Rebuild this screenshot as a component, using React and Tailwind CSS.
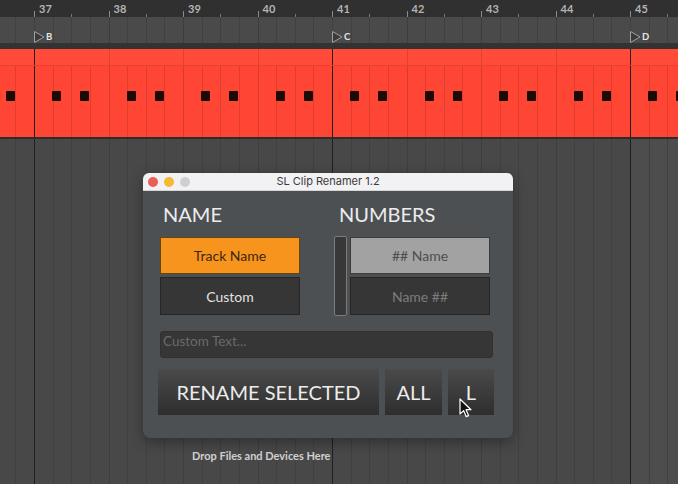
import clsx from "clsx";

const beats = Array.from({ length: 38 }, (_, i) => i - 2);
const bars = Array.from({ length: 11 }, (_, i) => 36 + i);
const locators = { 37: "B", 41: "C", 45: "D" };

// beat grid drawn behind a row; first cell starts at bar 36 + 3 beats
function Beats({ line, bar, loc, extra }) {
    return (
        <div className="absolute inset-y-0 left-[-3.25px] flex">
            {beats.map((k) => {
                const m = ((k % 4) + 4) % 4;
                const isLoc = m === 0 && locators[37 + k / 4];
                return (
                    <div
                        key={k}
                        className={clsx(
                            "w-[18.625px] shrink-0 h-full border-l",
                            isLoc ? loc : m === 0 ? bar : line,
                            k >= 32 && extra
                        )}
                    />
                );
            })}
        </div>
    );
}

function Ruler() {
    return (
        <div className="h-[17px] bg-[#303030] flex ml-[-40.5px] overflow-hidden">
            {bars.map((b) => (
                <div key={b} className="w-[74.5px] shrink-0 flex h-full">
                    <div className="w-[37.25px] shrink-0 flex items-end h-full">
                        <div className="w-px h-[6px] bg-[#8c8c8c]" />
                        {b > 36 && b < 46 && (
                            <span className="self-start mt-[2px] ml-[4px] text-[11px] leading-[13px] font-bold text-[#b4b4b4]">
                                {b}
                            </span>
                        )}
                    </div>
                    <div className="w-[37.25px] shrink-0 flex items-end h-full">
                        <div className="w-px h-[3px] bg-[#7a7a7a]" />
                    </div>
                </div>
            ))}
        </div>
    );
}

function LocatorRow() {
    return (
        <div className="relative h-[26px] bg-[#4a4a4a] overflow-hidden">
            <Beats line="border-[#404040]" bar="border-[#3c3c3c]" loc="border-[#404040]" />
            <div className="relative flex ml-[-40.5px] h-full">
                {bars.map((b) => (
                    <div key={b} className="w-[74.5px] shrink-0 flex items-start pt-[14px]">
                        {locators[b] && (
                            <>
                                <svg width="11" height="12" viewBox="0 0 11 12" className="shrink-0">
                                    <path d="M0.5 0.5 L10 6 L0.5 11.5 Z" fill="#3a3a3a" stroke="#a0a0a0" strokeWidth="1" />
                                </svg>
                                <span className="ml-[1px] mt-[1px] text-[9.5px] leading-[10px] font-bold text-[#e4e4e4]">
                                    {locators[b]}
                                </span>
                            </>
                        )}
                    </div>
                ))}
            </div>
        </div>
    );
}

function Clip() {
    return (
        <div>
            <div className="relative h-[17px] bg-[#ff4b37] overflow-hidden border-b border-[#e9412f]">
                <Beats line="border-transparent" bar="border-[#e4402e]" loc="border-[#1f1f1f]" />
            </div>
            <div className="relative h-[71px] bg-[#ff4533] overflow-hidden">
                <Beats line="border-[#e23d2c]" bar="border-[#d93a2a]" loc="border-[#1f1f1f]" />
                <div className="relative flex ml-[-40.5px] pt-[25px]">
                    {bars.map((b) => (
                        <div key={b} className="w-[74.5px] shrink-0 flex pl-[18px] gap-[19px]">
                            <div className="w-[9px] h-[10px] rounded-[1px] bg-[#1c0a06]" />
                            <div className="w-[9px] h-[10px] rounded-[1px] bg-[#1c0a06]" />
                        </div>
                    ))}
                </div>
            </div>
        </div>
    );
}

function Cursor() {
    return (
        <svg width="14" height="20" viewBox="0 0 14 20" className="absolute left-[459px] top-[398px]">
            <path
                d="M1 1 L1 16 L4.6 12.6 L7.2 18.6 L9.6 17.6 L7 11.7 L12 11.7 Z"
                fill="#111"
                stroke="#fff"
                strokeWidth="1.2"
                strokeLinejoin="round"
            />
        </svg>
    );
}

function Renamer() {
    return (
        <div className="absolute left-[143px] top-[173px] w-[370px] shadow-[0_4px_14px_rgba(0,0,0,0.35)] rounded-[8px]">
            <div className="relative h-[18px] bg-[#f2f1f3] rounded-t-[6px] flex items-center justify-center border-b border-[#d6d6d6]">
                <div className="absolute left-[5px] top-[4px] flex gap-[6px]">
                    <div className="w-[10px] h-[10px] rounded-full bg-[#ec5f57]" />
                    <div className="w-[10px] h-[10px] rounded-full bg-[#f4b933]" />
                    <div className="w-[10px] h-[10px] rounded-full bg-[#cfcfcf]" />
                </div>
                <span className="text-[11px] leading-[13px] text-[#3a3a3a] font-['Inter',sans-serif]">
                    SL Clip Renamer 1.2
                </span>
            </div>
            <div className="h-[247px] bg-[#4c5053] rounded-b-[8px] pl-[17px] flex flex-col">
                <div className="flex gap-[34px]">
                    <div className="w-[140px] flex flex-col">
                        <div className="h-[46px] pl-[3px] pt-[11px] text-[20px] leading-[24px] text-[#ececec]">NAME</div>
                        <button className="h-[37px] bg-[#f7941d] border border-[#6b4310] text-[14px] text-[#3a2814]">
                            Track Name
                        </button>
                        <button className="mt-[3px] h-[38px] bg-[#363636] border border-[#262626] text-[14px] text-[#e2e2e2]">
                            Custom
                        </button>
                    </div>
                    <div className="flex flex-col">
                        <div className="h-[46px] pl-[5px] pt-[11px] text-[20px] leading-[24px] text-[#ececec]">NUMBERS</div>
                        <div className="flex gap-[3px]">
                            <div className="-mt-px w-[13px] h-[80px] bg-[#383838] border border-[#7c7c7c] rounded-[2px]" />
                            <div className="w-[140px] flex flex-col">
                                <button className="h-[37px] bg-[#a2a2a2] border border-[#3c3c3c] text-[14px] text-[#4e4e4e]">
                                    ## Name
                                </button>
                                <button className="mt-[3px] h-[38px] bg-[#363636] border border-[#262626] text-[14px] text-[#7c7c7c]">
                                    Name ##
                                </button>
                            </div>
                        </div>
                    </div>
                </div>
                <div className="mt-[15px] w-[333px] h-[27px] bg-[#363636] border border-[#303030] rounded-[3px] pl-[2px] pt-[1px] text-[13.5px] leading-[16px] text-[#6a6a6a]">
                    Custom Text...
                </div>
                <div className="mt-[11px] -ml-[2px] flex gap-[6px] h-[46px]">
                    <button className="w-[221px] bg-linear-to-b from-[#4a4a4a] to-[#2e2e2e] text-[20px] text-[#ececec]">
                        RENAME SELECTED
                    </button>
                    <button className="w-[57px] bg-linear-to-b from-[#4a4a4a] to-[#2e2e2e] text-[20px] text-[#ececec]">
                        ALL
                    </button>
                    <button className="w-[46px] bg-linear-to-b from-[#4a4a4a] to-[#2e2e2e] text-[20px] text-[#ececec]">
                        L
                    </button>
                </div>
            </div>
        </div>
    );
}

export default function App() {
    return (
        <div className="relative w-[678px] h-[484px] overflow-hidden bg-[#484848] font-['Lato',sans-serif]">
            <Ruler />
            <LocatorRow />
            <div className="h-[6px] bg-[#333333]" />
            <Clip />
            <div className="h-[2px] bg-[#2c2c2c]" />
            <div className="relative h-[345px] overflow-hidden">
                <Beats
                    line="border-[#404040]"
                    bar="border-[#3e3e3e]"
                    loc="border-[#1f1f1f]"
                    extra="bg-[#4d4d4d]"
                />
                <div className="relative pl-[192px] pt-[310px] text-[11px] leading-[13px] font-bold text-[#d2d2d2]">
                    Drop Files and Devices Here
                </div>
            </div>
            <Renamer />
            <Cursor />
        </div>
    );
}
